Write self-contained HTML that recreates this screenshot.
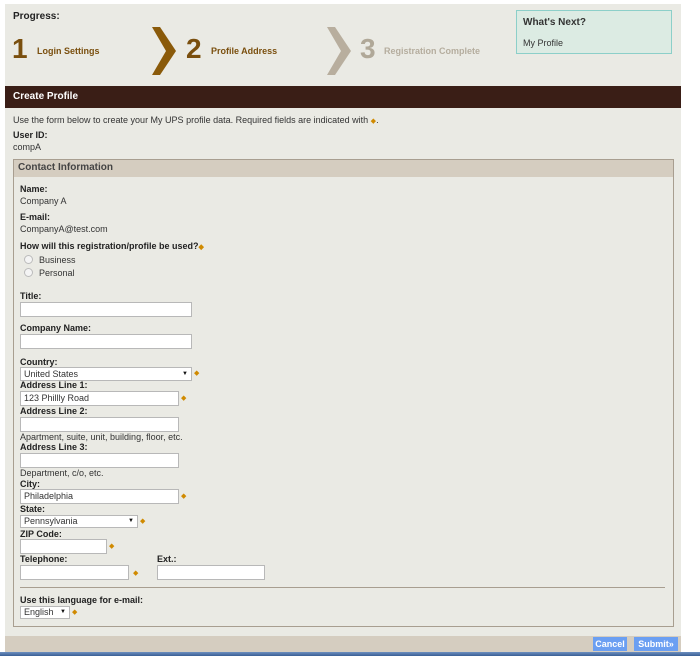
<!DOCTYPE html>
<html><head><meta charset="utf-8"><style>
*{margin:0;padding:0;box-sizing:border-box}
body{width:700px;height:656px;background:#fff;font-family:"Liberation Sans",sans-serif;font-size:9px;color:#333;position:relative;overflow:hidden}
.a{position:absolute;line-height:12px;white-space:nowrap}
.b{font-weight:bold;color:#222}
.in{position:absolute;background:#fff;border:1px solid #b8b8b8;height:15px;font-size:9px;line-height:13px;padding-left:3px;color:#333}
.d{position:absolute;color:#d08a00;font-size:7px;line-height:8px}
.sel:after{content:"▼";position:absolute;right:3px;top:0;font-size:6px;color:#111}
</style></head><body>
<div style="position:absolute;left:5px;top:4px;width:676px;height:648px;background:#eaeae4"></div>
<div class="a b" style="left:13px;top:11px;font-size:10px">Progress:</div>
<div class="a" style="left:12px;top:34px;font-size:28px;line-height:30px;color:#7a4f0e;font-weight:bold">1</div>
<div class="a b" style="left:37px;top:45px;color:#7a4f0e">Login Settings</div>
<svg style="position:absolute;left:150px;top:27px" width="28" height="48"><polygon points="2,0 10,0 26,24 10,48 2,48 16,24" fill="#8a5a0a"/></svg>
<div class="a" style="left:186px;top:34px;font-size:28px;line-height:30px;color:#7a4f0e;font-weight:bold">2</div>
<div class="a b" style="left:211px;top:45px;color:#7a4f0e">Profile Address</div>
<svg style="position:absolute;left:325px;top:27px" width="28" height="48"><polygon points="2,0 10,0 26,24 10,48 2,48 16,24" fill="#b8ae9e"/></svg>
<div class="a" style="left:360px;top:34px;font-size:28px;line-height:30px;color:#b0a898;font-weight:bold">3</div>
<div class="a b" style="left:384px;top:45px;color:#b5ad9e">Registration Complete</div>
<div style="position:absolute;left:516px;top:10px;width:156px;height:44px;background:#dcebe3;border:1px solid #8ccfc9"></div>
<div class="a b" style="left:523px;top:17px;font-size:10px;color:#333">What's Next?</div>
<div class="a" style="left:523px;top:37px">My Profile</div>
<div style="position:absolute;left:5px;top:86px;width:676px;height:22px;background:#3a1e16"></div>
<div class="a" style="left:13px;top:91px;color:#fff;font-weight:bold;font-size:10px">Create Profile</div>
<div class="a" style="left:13px;top:114px">Use the form below to create your My UPS profile data. Required fields are indicated with <span style="color:#d08a00;font-size:7px">◆</span>.</div>
<div class="a b" style="left:13px;top:129px">User ID:</div>
<div class="a" style="left:13px;top:141px">compA</div>
<div style="position:absolute;left:13px;top:159px;width:661px;height:468px;border:1px solid #a89e90"></div>
<div style="position:absolute;left:14px;top:160px;width:659px;height:17px;background:#d5cdc0"></div>
<div class="a b" style="left:18px;top:162px;color:#444;font-size:10px">Contact Information</div>
<div class="a b" style="left:20px;top:183px">Name:</div>
<div class="a" style="left:20px;top:195px">Company A</div>
<div class="a b" style="left:20px;top:211px">E-mail:</div>
<div class="a" style="left:20px;top:223px">CompanyA@test.com</div>
<div class="a b" style="left:20px;top:240px">How will this registration/profile be used?<span style="color:#d08a00;font-size:7px">◆</span></div>
<div style="position:absolute;left:24px;top:255px;width:9px;height:9px;border-radius:50%;border:1px solid #bbb;background:#f4f4f4"></div>
<div class="a" style="left:39px;top:254px">Business</div>
<div style="position:absolute;left:24px;top:268px;width:9px;height:9px;border-radius:50%;border:1px solid #bbb;background:#f4f4f4"></div>
<div class="a" style="left:39px;top:267px">Personal</div>
<div class="a b" style="left:20px;top:290px">Title:</div>
<div class="in" style="left:20px;top:302px;width:172px"></div>
<div class="a b" style="left:20px;top:322px">Company Name:</div>
<div class="in" style="left:20px;top:334px;width:172px"></div>
<div class="a b" style="left:20px;top:356px">Country:</div>
<div class="in sel" style="left:20px;top:367px;width:172px;height:14px;line-height:12px">United States</div>
<div class="d" style="left:194px;top:370px">◆</div>
<div class="a b" style="left:20px;top:379px">Address Line 1:</div>
<div class="in" style="left:20px;top:391px;width:159px">123 Phillly Road</div>
<div class="d" style="left:181px;top:395px">◆</div>
<div class="a b" style="left:20px;top:405px">Address Line 2:</div>
<div class="in" style="left:20px;top:417px;width:159px"></div>
<div class="a" style="left:20px;top:431px">Apartment, suite, unit, building, floor, etc.</div>
<div class="a b" style="left:20px;top:441px">Address Line 3:</div>
<div class="in" style="left:20px;top:453px;width:159px"></div>
<div class="a" style="left:20px;top:467px">Department, c/o, etc.</div>
<div class="a b" style="left:20px;top:478px">City:</div>
<div class="in" style="left:20px;top:489px;width:159px">Philadelphia</div>
<div class="d" style="left:181px;top:493px">◆</div>
<div class="a b" style="left:20px;top:503px">State:</div>
<div class="in sel" style="left:20px;top:515px;width:118px;height:13px;line-height:11px">Pennsylvania</div>
<div class="d" style="left:140px;top:518px">◆</div>
<div class="a b" style="left:20px;top:528px">ZIP Code:</div>
<div class="in" style="left:20px;top:539px;width:87px"></div>
<div class="d" style="left:109px;top:543px">◆</div>
<div class="a b" style="left:20px;top:553px">Telephone:</div>
<div class="a b" style="left:157px;top:553px">Ext.:</div>
<div class="in" style="left:20px;top:565px;width:109px"></div>
<div class="d" style="left:133px;top:570px">◆</div>
<div class="in" style="left:157px;top:565px;width:108px"></div>
<div style="position:absolute;left:20px;top:587px;width:645px;height:1px;background:#a89e90"></div>
<div class="a b" style="left:20px;top:594px">Use this language for e-mail:</div>
<div class="in sel" style="left:20px;top:606px;width:50px;height:13px;line-height:11px">English</div>
<div class="d" style="left:72px;top:609px">◆</div>
<div style="position:absolute;left:5px;top:636px;width:676px;height:16px;background:#d5cdc0"></div>
<div class="a" style="left:593px;top:637px;width:34px;height:14px;background:#6b9ff2;color:#fff;font-weight:bold;text-align:center;line-height:14px">Cancel</div>
<div class="a" style="left:634px;top:637px;width:44px;height:14px;background:#6b9ff2;color:#fff;font-weight:bold;text-align:center;line-height:14px">Submit»</div>
<div style="position:absolute;left:0;top:652px;width:700px;height:4px;background:linear-gradient(#6d8fbf,#3a5f95)"></div>
</body></html>
